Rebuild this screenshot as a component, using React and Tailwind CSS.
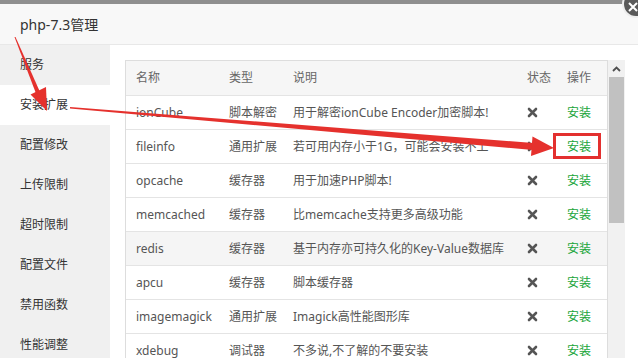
import React from 'react';

const menu = ['服务', '安装扩展', '配置修改', '上传限制', '超时限制', '配置文件', '禁用函数', '性能调整'];

const rows = [
  { name: 'ionCube', type: '脚本解密', desc: '用于解密ionCube Encoder加密脚本!' },
  { name: 'fileinfo', type: '通用扩展', desc: '若可用内存小于1G，可能会安装不上' },
  { name: 'opcache', type: '缓存器', desc: '用于加速PHP脚本!' },
  { name: 'memcached', type: '缓存器', desc: '比memcache支持更多高级功能' },
  { name: 'redis', type: '缓存器', desc: '基于内存亦可持久化的Key-Value数据库', hover: true },
  { name: 'apcu', type: '缓存器', desc: '脚本缓存器' },
  { name: 'imagemagick', type: '通用扩展', desc: 'Imagick高性能图形库' },
  { name: 'xdebug', type: '调试器', desc: '不多说,不了解的不要安装' },
];

function Cross() {
  return (
    <svg width="11" height="11" viewBox="0 0 11 11">
      <path d="M2 2 L9 9 M9 2 L2 9" stroke="#555" strokeWidth="2.6" strokeLinecap="round" />
    </svg>
  );
}

function Annotations() {
  return (
    <svg className="absolute inset-0 pointer-events-none" width="638" height="358" viewBox="0 0 638 358">
      {/* arrow down to the menu item */}
      <polygon points="14.5,37 15.5,37 40,92 36,93.5" fill="#e5312d" />
      <polygon points="47,111 46,87 30.5,94.5" fill="#e5312d" />
      {/* arrow across to the install link */}
      <polygon points="70,107 70,108.5 533,150 533.5,143" fill="#e5312d" />
      <polygon points="554,148 532.5,136.5 531,156" fill="#e5312d" />
      <rect x="554.5" y="134.5" width="45" height="23" fill="none" stroke="#e3302f" strokeWidth="3" />
    </svg>
  );
}

export default function App() {
  return (
    <div className="relative w-[638px] h-[358px] overflow-hidden bg-white font-['Noto_Sans','Noto_Sans_CJK_SC',sans-serif] text-[12px] text-[#555]">
      <div className="h-[4px] bg-[#8f8f8f]" />
      <div className="h-[41px] bg-[#f8f8f8] border-b border-[#e8e8e8] pl-[20px] flex items-center text-[14px] text-[#333]">
        php-7.3管理
      </div>

      <div className="flex">
        {/* sidebar */}
        <div className="w-[110px] h-[313px] bg-[#f0f0f0] flex flex-col">
          {menu.map((m, i) => (
            <div
              key={m}
              className={`h-[40px] shrink-0 flex items-center pl-[20px] text-[#333] ${i === 1 ? 'bg-white' : ''}`}
            >
              {m}
            </div>
          ))}
        </div>

        {/* content */}
        <div className="flex pl-[15px] pt-[15px]">
          <div className="w-[483px] border border-b-0 border-[#dddddd]">
            <div className="grid grid-cols-[93px_64px_234px_40px_50px] h-[35px] items-center bg-[#f6f6f6] border-b border-[#e4e4e4] text-[#666]">
              <div className="pl-[10px]">名称</div>
              <div className="pl-[10px]">类型</div>
              <div className="pl-[10px]">说明</div>
              <div className="pl-[10px]">状态</div>
              <div className="pl-[10px]">操作</div>
            </div>
            {rows.map(r => (
              <div
                key={r.name}
                className={`grid grid-cols-[93px_64px_234px_40px_50px] h-[34px] items-center border-b border-[#e4e4e4] ${r.hover ? 'bg-[#f5f5f5]' : ''}`}
              >
                <div className="pl-[10px]">{r.name}</div>
                <div className="pl-[10px]">{r.type}</div>
                <div className="pl-[10px] whitespace-nowrap">{r.desc}</div>
                <div className="pl-[10px] flex items-center"><Cross /></div>
                <div className="pl-[10px] text-[#20a53a]">安装</div>
              </div>
            ))}
          </div>

          {/* scrollbar */}
          <div className="w-[17px] h-[298px] bg-[#f1f1f1] flex flex-col">
            <div className="h-[17px] flex items-center justify-center">
              <svg width="9" height="6" viewBox="0 0 9 6">
                <path d="M1 5 L4.5 1.5 L8 5" stroke="#505050" strokeWidth="1.8" fill="none" />
              </svg>
            </div>
            <div className="ml-[1px] w-[15px] h-[146px] bg-[#c1c1c1]" />
          </div>
        </div>
      </div>

      {/* close button */}
      <div className="absolute right-[-12px] top-[-10px] w-[28px] h-[28px] rounded-full bg-[#5a5a5a] border-2 border-[#eee] flex items-center justify-center">
        <svg width="10" height="10" viewBox="0 0 10 10" className="mt-[6px] mr-[6px]">
          <path d="M1 1 L9 9 M9 1 L1 9" stroke="#fff" strokeWidth="2" />
        </svg>
      </div>

      <Annotations />
    </div>
  );
}
